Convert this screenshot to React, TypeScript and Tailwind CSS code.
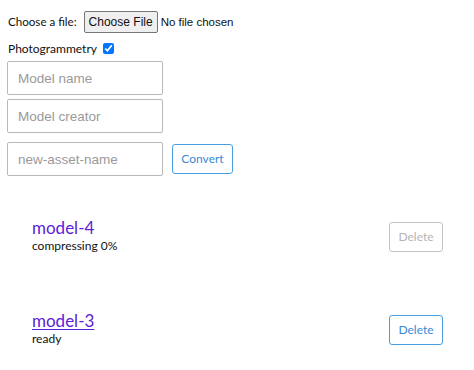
import React from "react";

const models = [
  { name: "model-4", status: "compressing 0%", ready: false },
  { name: "model-3", status: "ready", ready: true },
];

const inputCls =
  "block w-[156px] h-[34px] px-[10px] border border-[#b8b8b8] rounded-[2px] text-[13.5px] text-[#333] placeholder:text-[#9a9a9a] outline-none font-['Liberation_Sans',Arial,sans-serif]";

export default function App() {
  return (
    <div className="font-['Lato','Noto_Sans',sans-serif] text-[12px] text-[#111] bg-white min-h-[370px]">
      {/* upload form */}
      <div className="pl-[7px] pt-[12px]">
        <div className="flex items-center gap-[7px] h-[19px]">
          <span className="pl-[1px] text-[11.6px]">Choose a file:</span>
          <input
            type="file"
            className="text-[11.5px] font-['Liberation_Sans',Arial,sans-serif] file:mr-[3px] file:px-[4px] file:py-[1px] file:text-[12px] file:border file:border-[#767676] file:rounded-[2px] file:bg-[#efefef] file:text-[#111]"
          />
        </div>
        <div className="flex items-center gap-[6px] mt-[8px] h-[19px]">
          <span className="pl-[1px]">Photogrammetry</span>
          <input type="checkbox" defaultChecked className="w-[11px] h-[11px] accent-[#0075ff]" />
        </div>
        <div className="flex flex-col gap-[4px] mt-[3px]">
          <input className={inputCls} placeholder="Model name" />
          <input className={inputCls} placeholder="Model creator" />
        </div>
        <div className="flex items-center gap-[9px] mt-[9px]">
          <input className={inputCls} placeholder="new-asset-name" />
          <button className="h-[30px] w-[61px] border border-[#4a9fe0] rounded-[3px] text-[#3a8ad6] text-[12px] bg-white">
            Convert
          </button>
        </div>
      </div>

      {/* model list */}
      <div className="mt-[45px] pl-[32px] pr-[31px] flex flex-col gap-[61px]">
        {models.map((m) => (
          <div key={m.name} className="flex items-center justify-between">
            <div className="flex flex-col -mt-[3px]">
              <a
                href="#"
                className={
                  "text-[17px] leading-[20px] text-[#5b21d6] " +
                  (m.ready ? "underline underline-offset-[2px]" : "no-underline")
                }
              >
                {m.name}
              </a>
              <span className="text-[12px] leading-[15px] text-[#111]">{m.status}</span>
            </div>
            <button
              disabled={!m.ready}
              className={
                "h-[30px] w-[54px] rounded-[3px] text-[12px] bg-white border " +
                (m.ready
                  ? "border-[#4a9fe0] text-[#3a8ad6]"
                  : "border-[#c4c4c4] text-[#b5b5b5]")
              }
            >
              Delete
            </button>
          </div>
        ))}
      </div>
    </div>
  );
}
